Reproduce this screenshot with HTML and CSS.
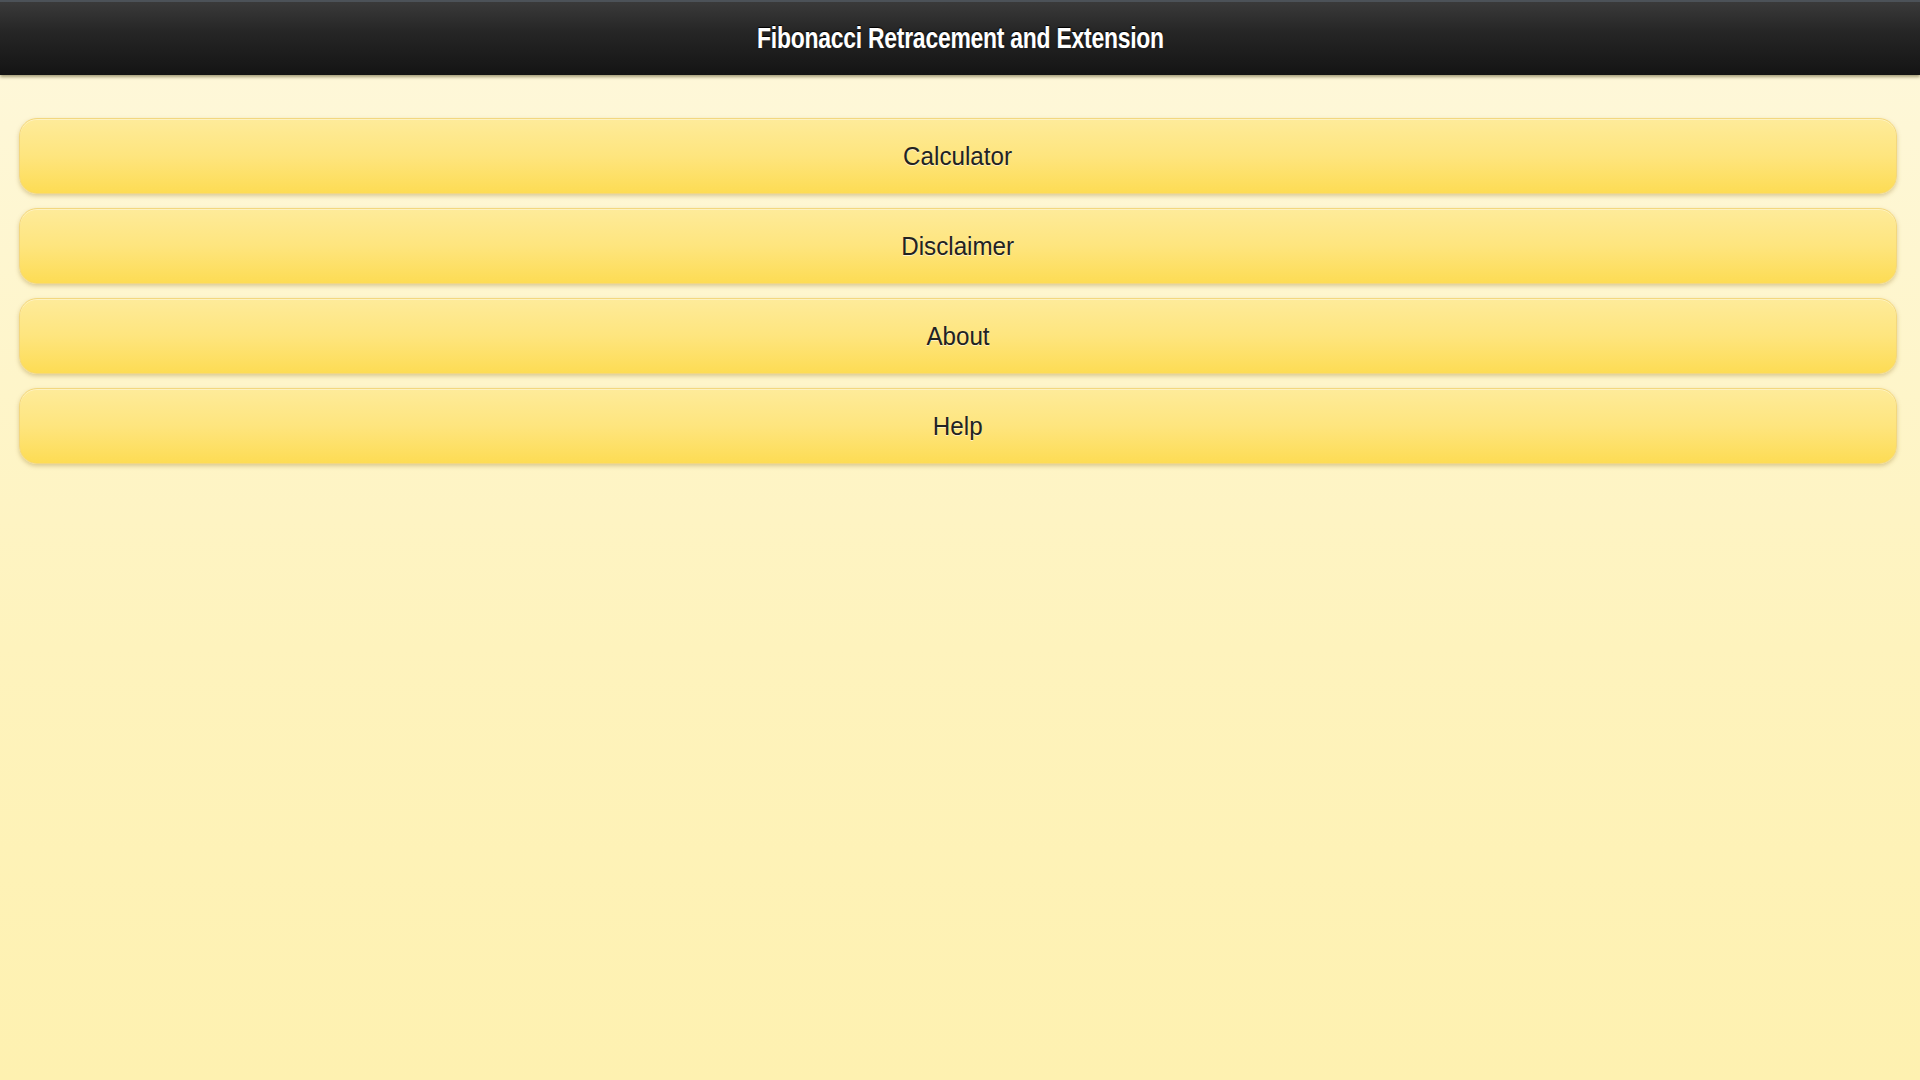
FILE: index.html
```html
<!DOCTYPE html>
<html lang="en">
<head>
<meta charset="utf-8">
<title>Fibonacci Retracement and Extension</title>
<link rel="stylesheet" href="styles.css">
</head>
<body>
<div class="page">
  <header class="header">
    <h1 class="title"><span class="title-text">Fibonacci Retracement and Extension</span></h1>
  </header>
  <main class="content">
    <nav class="menu">
      <a class="btn" href="#"><span class="btn-text">Calculator</span></a>
      <a class="btn" href="#"><span class="btn-text">Disclaimer</span></a>
      <a class="btn" href="#"><span class="btn-text">About</span></a>
      <a class="btn" href="#"><span class="btn-text">Help</span></a>
    </nav>
  </main>
</div>
</body>
</html>
```
FILE: styles.css
```css
html, body {
  margin: 0;
  padding: 0;
  height: 100%;
}
body {
  font-family: "Liberation Sans", Arial, sans-serif;
  background: linear-gradient(to bottom, #fef8dc 0%, #fef3bd 60%, #fef1b0 100%);
  overflow: hidden;
}
.page {
  display: flex;
  flex-direction: column;
  height: 100vh;
}
.header {
  height: 75px;
  flex: none;
  display: flex;
  align-items: center;
  justify-content: center;
  background: linear-gradient(to bottom, #3a3a3a 0%, #262626 40%, #141414 100%);
  border-top: 2px solid #4c5258;
  box-sizing: border-box;
  box-shadow: 0 2px 3px rgba(90, 80, 40, 0.55);
  position: relative;
  z-index: 1;
}
.title {
  margin: 0;
  font-size: 29px;
  font-weight: bold;
  color: #ffffff;
  line-height: 1;
}
.title-text {
  display: inline-block;
  transform: scaleX(0.79);
  letter-spacing: -0.3px;
  text-shadow: 0 -1px 1px #000, 0 0 2px rgba(0,0,0,0.8), 0 0 1px rgba(255,255,255,0.5);
  white-space: nowrap;
}
.content {
  flex: 1;
  padding: 43px 23px 0 19px;
}
.menu {
  display: flex;
  flex-direction: column;
  gap: 14px;
}
.btn {
  height: 76px;
  box-sizing: border-box;
  display: flex;
  align-items: center;
  justify-content: center;
  border: 1px solid #f3d77e;
  border-radius: 18px;
  background: linear-gradient(to bottom, #feeb9a 0%, #fee57e 50%, #fddc54 100%);
  box-shadow: 0 2px 4px rgba(150, 120, 40, 0.35), inset 0 1px 0 rgba(255,255,255,0.4);
  text-decoration: none;
  color: #222222;
}
.btn-text {
  display: inline-block;
  font-size: 26px;
  transform: scaleX(0.93);
  text-shadow: 0 1px 0 rgba(255,255,255,0.6);
  white-space: nowrap;
}
```
